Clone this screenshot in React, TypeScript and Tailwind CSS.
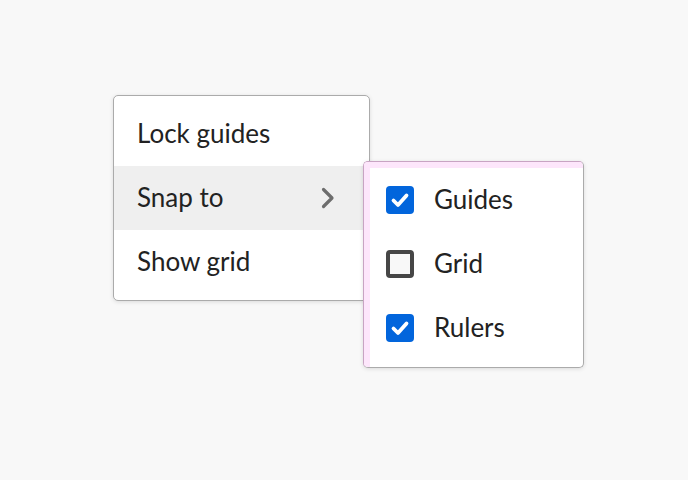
import React from "react";

function Chevron() {
  return (
    <svg width="14" height="22" viewBox="0 0 14 22" className="block">
      <path d="M2.5 2.5 L11 11 L2.5 19.5" fill="none" stroke="#6d6d6d" strokeWidth="3.2" strokeLinecap="round" strokeLinejoin="round" />
    </svg>
  );
}

function Checkbox({ checked }: { checked: boolean }) {
  if (checked) {
    return (
      <div className="w-[28px] h-[28px] rounded-[4px] bg-[#0265dc] flex items-center justify-center shrink-0">
        <svg width="28" height="28" viewBox="0 0 28 28" className="block">
          <path d="M7.5 14.5 L12 19 L20.5 9.5" fill="none" stroke="#ffffff" strokeWidth="3.8" strokeLinecap="round" strokeLinejoin="round" />
        </svg>
      </div>
    );
  }
  return <div className="w-[28px] h-[28px] rounded-[4px] border-[4px] border-[#464646] bg-[#f8f8f8] shrink-0" />;
}

export default function App() {
  const font = { fontFamily: "Lato, 'Noto Sans', sans-serif" };
  return (
    <div className="w-[688px] h-[480px] bg-[#f8f8f8] flex items-start pt-[95px] pl-[113px]" style={font}>
      <div className="w-[257px] h-[206px] bg-white border border-[#ababab] rounded-[5px] py-[6px] shadow-[0_1px_4px_rgba(0,0,0,0.12)] shrink-0">
        <div className="h-[64px] flex items-center pl-[23px] pb-[2px] text-[26px] text-[#222222]">Lock guides</div>
        <div className="h-[64px] flex items-center justify-between pl-[23px] pr-[34px] bg-[#efefef] text-[26px] text-[#222222]">
          <span className="pb-[2px]">Snap to</span>
          <Chevron />
        </div>
        <div className="h-[64px] flex items-center pl-[23px] pb-[2px] text-[26px] text-[#222222]">Show grid</div>
      </div>
      <div className="relative z-10 -ml-[7px] mt-[66px] w-[221px] h-[207px] bg-white border border-[#ababab] border-l-[#c8a4c3] border-t-[#c8a4c3] rounded-[5px] overflow-hidden pt-[6px] pb-[6px] shadow-[0_1px_4px_rgba(0,0,0,0.12)] shrink-0">
        <div className="absolute left-0 top-0 bottom-0 w-[6px] bg-[#fde6fb]" />
        <div className="absolute left-0 top-0 right-0 h-[6px] bg-[#fde6fb]" />
        {[
          { label: "Guides", checked: true },
          { label: "Grid", checked: false },
          { label: "Rulers", checked: true },
        ].map((it) => (
          <div key={it.label} className="h-[64px] flex items-center pl-[22px] gap-[20px] text-[26px] text-[#222222]">
            <Checkbox checked={it.checked} />
            <span className="pb-[2px]">{it.label}</span>
          </div>
        ))}
      </div>
    </div>
  );
}
